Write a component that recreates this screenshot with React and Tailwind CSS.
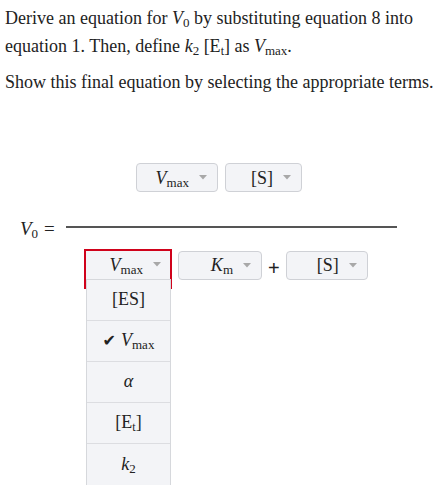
import React from 'react'

const serif = { fontFamily: '"Liberation Serif", "Times New Roman", serif' }

const Caret = () => (
  <svg width="8" height="5" viewBox="0 0 8 5" className="shrink-0">
    <path d="M0 0 L8 0 L4 4.5 Z" fill="#a8a8a8" />
  </svg>
)

const Vmax = () => (
  <span>
    <i>V</i>
    <sub className="text-[13px] not-italic">max</sub>
  </span>
)

const Km = () => (
  <span>
    <i>K</i>
    <sub className="text-[13px]">m</sub>
  </span>
)

const Conc = ({ children }) => <span>[{children}]</span>

const Select = ({ children, w }) => (
  <div
    className={`${w} h-[29px] flex items-center justify-end gap-[10px] pr-[10px] rounded-[4px] border border-[#cfd1d6] bg-[#f3f4f7] text-[18px] text-[#222]`}
  >
    <span className="leading-none">{children}</span>
    <Caret />
  </div>
)

const options = [
  { key: 'es', label: <Conc>ES</Conc> },
  { key: 'vmax', label: <Vmax />, checked: true },
  { key: 'alpha', label: <i>α</i> },
  {
    key: 'et',
    label: (
      <Conc>
        E<sub className="text-[12px]">t</sub>
      </Conc>
    ),
  },
  {
    key: 'k2',
    label: (
      <span>
        <i>k</i>
        <sub className="text-[13px]">2</sub>
      </span>
    ),
  },
]

export default function App() {
  return (
    <div className="w-[444px] h-[485px] overflow-hidden bg-white text-[#222]" style={serif}>
      <div className="pl-[5px] pt-[4px] text-[18px] leading-[28px]">
        <p>
          Derive an equation for <i>V</i>
          <sub className="text-[13px]">0</sub> by substituting equation 8 into
        </p>
        <p>
          equation 1. Then, define <i>k</i>
          <sub className="text-[13px]">2</sub> [E
          <sub className="text-[12px]">t</sub>] as <Vmax />.
        </p>
        <p className="mt-[8px]">Show this final equation by selecting the appropriate terms.</p>
      </div>

      <div className="flex mt-[67px] pl-[20px]">
        <div className="self-start mt-[55px] text-[19px] leading-[22px] whitespace-nowrap w-[46px]">
          <i>V</i>
          <sub className="text-[13px]">0</sub>
          <span className="ml-[6px]">=</span>
        </div>

        <div className="flex flex-col w-[331px]">
          <div className="flex gap-[7px] pl-[70px]">
            <Select w="w-[82px]">
              <Vmax />
            </Select>
            <Select w="w-[77px]">
              <Conc>S</Conc>
            </Select>
          </div>

          <div className="h-[1.5px] bg-[#555] mt-[34px]" />

          <div className="flex items-start gap-[6px] pl-[18px] mt-[21px]">
            <div className="relative w-[88px] h-[40px] border-2 border-[#d0021b]">
              <div className="h-[28px] flex items-center justify-end gap-[10px] pr-[9px] bg-[#f3f4f7] text-[18px]">
                <span className="leading-none">
                  <Vmax />
                </span>
                <Caret />
              </div>
              <div className="absolute left-0 top-[28px] w-[85px] z-10 bg-[#f3f4f7] border border-[#d6d8dc]">
                {options.map((o) => (
                  <div
                    key={o.key}
                    className="h-[41px] flex items-center justify-center border-b border-[#dcdde1] last:border-b-0 text-[18px]"
                  >
                    {o.checked && (
                      <span
                        className="mr-[5px] text-[16px] leading-none"
                        style={{ fontFamily: '"DejaVu Sans", sans-serif' }}
                      >
                        ✔
                      </span>
                    )}
                    {o.label}
                  </div>
                ))}
              </div>
            </div>
            <div className="mt-[2px]">
              <Select w="w-[84px]">
                <Km />
              </Select>
            </div>
            <span
              className="mt-[4px] text-[20px]"
              style={{ fontFamily: '"Liberation Sans", Arial, sans-serif' }}
            >
              +
            </span>
            <div className="mt-[2px]">
              <Select w="w-[82px]">
                <Conc>S</Conc>
              </Select>
            </div>
          </div>
        </div>
      </div>
    </div>
  )
}
